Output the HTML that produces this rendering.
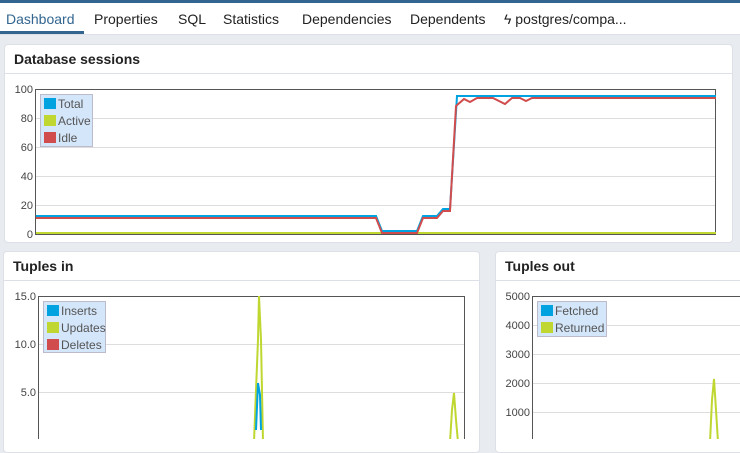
<!DOCTYPE html>
<html><head><meta charset="utf-8"><style>
body{margin:0;width:740px;height:439px;overflow:hidden;background:#e8ecf1;font-family:"Liberation Sans",sans-serif;position:relative}
.top{position:absolute;left:0;top:0;width:740px;height:3px;background:#326690}
.tabs{position:absolute;left:0;top:3px;width:740px;height:31px;background:#fff;border-bottom:1px solid #dde0e6}
.tab{position:absolute;top:8px;font-size:14px;color:#222}
.panel{position:absolute;background:#fff;border:1px solid #dde0e6;border-radius:4px}
.ph{height:29px;border-bottom:1px solid #dde0e6;font-size:14px;font-weight:bold;color:#222;padding-left:9px;line-height:29px;box-sizing:border-box}
svg{position:absolute;left:0;top:0}
svg text{font-family:"Liberation Sans",sans-serif;font-size:11px;fill:#444}
svg text.lg{font-size:12px;fill:#555}
</style></head><body>
<div class="top"></div>
<div class="tabs">
<div style="position:absolute;left:0;top:28px;width:84px;height:3px;background:#326690"></div>
<span class="tab" style="left:6px;color:#326690">Dashboard</span>
<span class="tab" style="left:94px">Properties</span>
<span class="tab" style="left:178px">SQL</span>
<span class="tab" style="left:223px">Statistics</span>
<span class="tab" style="left:302px">Dependencies</span>
<span class="tab" style="left:410px">Dependents</span>
<span class="tab" style="left:504px">ϟ postgres/compa...</span>
</div>
<div class="panel" style="left:4px;top:44px;width:727px;height:197px"><div class="ph">Database sessions</div></div>
<div class="panel" style="left:3px;top:251px;width:475px;height:200px"><div class="ph">Tuples in</div></div>
<div class="panel" style="left:495px;top:251px;width:260px;height:200px"><div class="ph">Tuples out</div></div>
<svg width="740" height="439">
<g stroke="#ddd" stroke-width="1">
<line x1="35" x2="716" y1="118.5" y2="118.5"/><line x1="35" x2="716" y1="147.5" y2="147.5"/><line x1="35" x2="716" y1="176.5" y2="176.5"/><line x1="35" x2="716" y1="205.5" y2="205.5"/>
<line x1="38" x2="465" y1="344.5" y2="344.5"/><line x1="38" x2="465" y1="392.5" y2="392.5"/>
<line x1="532" x2="740" y1="325.5" y2="325.5"/><line x1="532" x2="740" y1="354.5" y2="354.5"/><line x1="532" x2="740" y1="383.5" y2="383.5"/><line x1="532" x2="740" y1="412.5" y2="412.5"/>
</g>
<rect x="35.5" y="89.5" width="680" height="145" fill="none" stroke="#555"/>
<rect x="38.5" y="296.5" width="426" height="150" fill="none" stroke="#555"/>
<rect x="532.5" y="296.5" width="220" height="150" fill="none" stroke="#555"/>
<g text-anchor="end">
<text x="33" y="93">100</text><text x="33" y="122">80</text><text x="33" y="151">60</text><text x="33" y="180">40</text><text x="33" y="209">20</text><text x="33" y="238">0</text>
<text x="36" y="300">15.0</text><text x="36" y="348">10.0</text><text x="36" y="396">5.0</text>
<text x="530" y="300">5000</text><text x="530" y="329">4000</text><text x="530" y="358">3000</text><text x="530" y="387">2000</text><text x="530" y="416">1000</text>
</g>
<polyline fill="none" stroke="#bfd730" stroke-width="2" points="36,233 716,233"/>
<polyline fill="none" stroke="#00a3e0" stroke-width="2" points="36,216 376,216 382,231 417,231 423,216 437,216 443,209 450,209 457,96 716,96"/>
<polyline fill="none" stroke="#d14d4d" stroke-width="2" points="36,218 376,218 382,233 417,233 423,218 437,218 443,211 450,211 456,106 464,99 470,102 477,98 493,98 505,104 512,98 520,98 526,101 532,98 716,98"/>
<polyline fill="none" stroke="#bfd730" stroke-width="2" points="38,442 254,442 256,390 258,340 259,296 261,340 263,442 450,442 452,410 454,393 456,420 458,442"/>
<polyline fill="none" stroke="#00a3e0" stroke-width="2" points="256,430 258,383 260,395 261,430"/>
<polyline fill="none" stroke="#bfd730" stroke-width="2" points="710,442 712,400 714,379 716,410 718,442"/>
<rect x="40.5" y="94.5" width="52" height="52" fill="#d4e6fa" stroke="#bbc"/>
<rect x="44" y="98" width="12" height="11" fill="#00a3e0"/><text class="lg" x="58" y="108">Total</text>
<rect x="44" y="115" width="12" height="11" fill="#bfd730"/><text class="lg" x="58" y="125">Active</text>
<rect x="44" y="132" width="12" height="11" fill="#d14d4d"/><text class="lg" x="58" y="142">Idle</text>
<rect x="43.5" y="301.5" width="62" height="51" fill="#d4e6fa" stroke="#bbc"/>
<rect x="47" y="305" width="12" height="11" fill="#00a3e0"/><text class="lg" x="61" y="315">Inserts</text>
<rect x="47" y="322" width="12" height="11" fill="#bfd730"/><text class="lg" x="61" y="332">Updates</text>
<rect x="47" y="339" width="12" height="11" fill="#d14d4d"/><text class="lg" x="61" y="349">Deletes</text>
<rect x="537.5" y="301.5" width="69" height="35" fill="#d4e6fa" stroke="#bbc"/>
<rect x="541" y="305" width="12" height="11" fill="#00a3e0"/><text class="lg" x="555" y="315">Fetched</text>
<rect x="541" y="322" width="12" height="11" fill="#bfd730"/><text class="lg" x="555" y="332">Returned</text>
</svg>
</body></html>
